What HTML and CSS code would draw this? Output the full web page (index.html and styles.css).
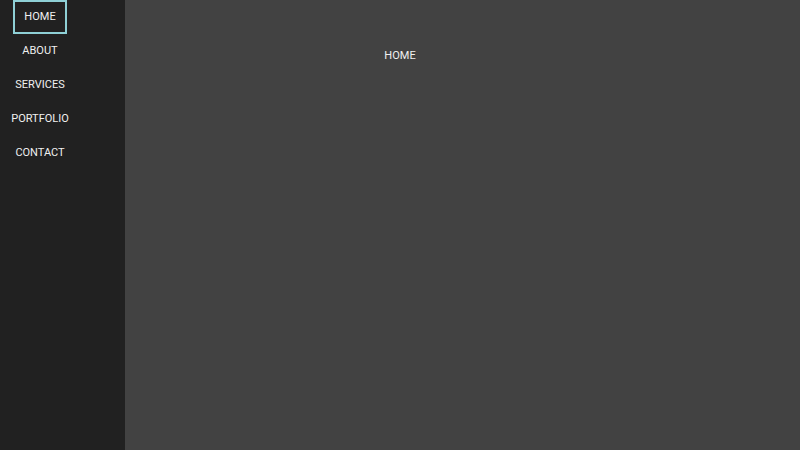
FILE: index.html
```html
<!DOCTYPE html>
<html>
<head>
<meta charset="utf-8">
<link rel="stylesheet" href="styles.css">
</head>
<body>
<div class="layout">
  <aside class="sidebar">
    <nav class="nav">
      <a class="nav-item active">HOME</a>
      <a class="nav-item">ABOUT</a>
      <a class="nav-item">SERVICES</a>
      <a class="nav-item">PORTFOLIO</a>
      <a class="nav-item">CONTACT</a>
    </nav>
  </aside>
  <main class="main">
    <div class="title">HOME</div>
  </main>
</div>
</body>
</html>
```
FILE: styles.css
```css
html, body {
  margin: 0;
  padding: 0;
  height: 100%;
}
body {
  font-family: Roboto, "Liberation Sans", Arial, sans-serif;
  font-size: 11px;
  color: #f0f0f0;
}
.layout {
  display: flex;
  height: 100%;
}
.sidebar {
  width: 125px;
  background: #212121;
  flex: none;
}
.nav {
  width: 80px;
  display: flex;
  flex-direction: column;
  align-items: center;
}
.nav-item {
  display: flex;
  align-items: center;
  justify-content: center;
  height: 34px;
  box-sizing: border-box;
  padding: 0 9px 2px;
  border: 2px solid transparent;
  color: #f0f0f0;
}
.nav-item.active {
  border-color: #8fd0d6;
}
.main {
  flex: 1;
  background: #424242;
  padding: 49px 125px 0 0;
  box-sizing: border-box;
}
.title {
  text-align: center;
  line-height: 14px;
}
```
